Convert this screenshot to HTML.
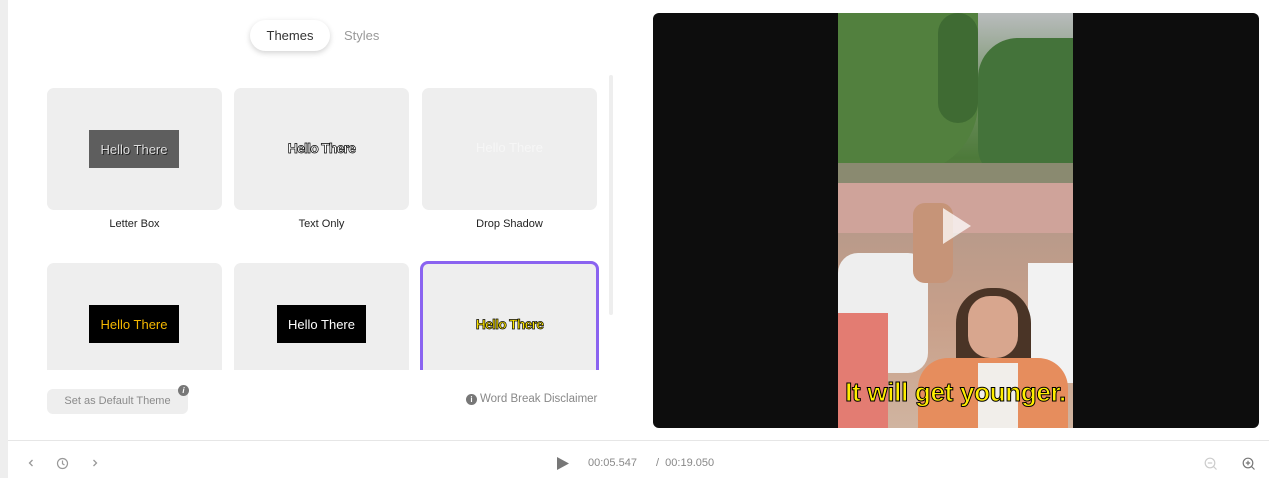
<!DOCTYPE html>
<html><head><style>
*{box-sizing:border-box;margin:0;padding:0}
body{width:1269px;height:478px;overflow:hidden;background:#fff;font-family:"Liberation Sans",sans-serif;position:relative}
.strip{position:absolute;left:0;top:0;width:8px;height:478px;background:#eeeeee}
.abs{position:absolute}
.card{position:absolute;background:#eeeeee;border-radius:7px;width:175px}
.lbl{position:absolute;font-size:11px;color:#222;text-align:center;width:175px}
.box{position:absolute;font-size:13px;display:flex;align-items:center;justify-content:center}
.ht{font-size:13px;position:absolute;width:100%;text-align:center}
</style></head><body>
<div class="strip"></div>
<div class="abs" style="left:250px;top:20px;width:80px;height:31px;border-radius:16px;background:#fff;box-shadow:0 2px 6px rgba(0,0,0,.18);font-size:13px;color:#333;text-align:center;line-height:31px">Themes</div>
<div class="abs" style="left:344px;top:28px;font-size:13px;color:#999">Styles</div>
<div class="abs" style="left:609px;top:75px;width:4px;height:240px;background:#eee;border-radius:2px"></div>
<div class="card" style="left:47px;top:88px;height:122px"><div class="box" style="left:42px;top:42px;width:90px;height:38px;background:#5e5e5e;color:#ddd;text-shadow:1px 1px 0 #222">Hello There</div></div>
<div class="card" style="left:234px;top:88px;height:122px"><div class="ht" style="top:52px;font-size:14px;color:#fff;-webkit-text-stroke:0.7px #000;font-weight:bold;letter-spacing:-0.8px">Hello There</div></div>
<div class="card" style="left:422px;top:88px;height:122px"><div class="ht" style="top:52px;color:#f6f6f6">Hello There</div></div>
<div class="lbl" style="left:47px;top:218px">Letter Box</div>
<div class="lbl" style="left:234px;top:218px">Text Only</div>
<div class="lbl" style="left:422px;top:218px">Drop Shadow</div>
<div class="card" style="left:47px;top:263px;height:107px;border-radius:7px 7px 0 0"><div class="box" style="left:42px;top:42px;width:90px;height:38px;background:#000;color:#f5b800">Hello There</div></div>
<div class="card" style="left:234px;top:263px;height:107px;border-radius:7px 7px 0 0"><div class="box" style="left:43px;top:42px;width:89px;height:38px;background:#000;color:#fff">Hello There</div></div>
<div class="card" style="left:420px;top:261px;width:179px;height:109px;border:3px solid #8a63f0;border-bottom:none;border-radius:8px 8px 0 0"><div class="ht" style="top:52px;font-size:14px;color:#ffe600;-webkit-text-stroke:0.7px #000;font-weight:bold;letter-spacing:-0.8px">Hello There</div></div>
<div class="abs" style="left:47px;top:389px;width:141px;height:25px;background:#eeeeee;border-radius:6px;font-size:11px;color:#8a8a8a;line-height:25px;text-align:center">Set as Default Theme</div>
<div class="abs" style="left:178px;top:385px;width:11px;height:11px;border-radius:50%;background:#777;color:#fff;font-size:8px;text-align:center;line-height:11px;font-style:italic;font-weight:bold">i</div>
<div class="abs" style="left:466px;top:394px;width:11px;height:11px;border-radius:50%;background:#777;color:#fff;font-size:8px;text-align:center;line-height:11px;font-weight:bold">i</div>
<div class="abs" style="left:480px;top:393px;font-size:11.5px;color:#888">Word Break Disclaimer</div>
<div class="abs" style="left:653px;top:13px;width:606px;height:415px;background:#0d0d0d;border-radius:6px;overflow:hidden">
 <div class="abs" style="left:185px;top:0;width:235px;height:415px;overflow:hidden;background:linear-gradient(180deg,#b9bcbd 0%,#6f8f60 20%,#4d7a3a 35%,#6b7a5a 45%,#b89a8a 52%,#c9a08a 75%,#d0b4a0 100%)">
  <div class="abs" style="left:0;top:0;width:140px;height:160px;background:#52803e;border-radius:0 0 70px 0"></div>
  <div class="abs" style="left:100px;top:0;width:40px;height:110px;background:#3f6b33;border-radius:20px"></div>
  <div class="abs" style="left:140px;top:25px;width:95px;height:140px;background:#44733a;border-radius:40px 0 0 30px"></div>
  <div class="abs" style="left:0;top:150px;width:235px;height:20px;background:#8a8a70"></div>
  <div class="abs" style="left:0;top:170px;width:235px;height:50px;background:#cfa39a"></div>
  <div class="abs" style="left:0;top:240px;width:90px;height:120px;background:#eee;border-radius:20px"></div>
  <div class="abs" style="left:75px;top:190px;width:40px;height:80px;background:#c69478;border-radius:12px"></div>
  <div class="abs" style="left:190px;top:250px;width:45px;height:120px;background:#f2f2f2"></div>
  <div class="abs" style="left:0;top:300px;width:50px;height:115px;background:#e37c72"></div>
  <div class="abs" style="left:118px;top:275px;width:75px;height:90px;background:#4a3426;border-radius:35px 35px 5px 5px"></div>
  <div class="abs" style="left:130px;top:283px;width:50px;height:62px;background:#d8a68e;border-radius:22px"></div>
  <div class="abs" style="left:80px;top:345px;width:150px;height:70px;background:#e68d5d;border-radius:30px 30px 0 0"></div>
  <div class="abs" style="left:140px;top:350px;width:40px;height:65px;background:#f1eeea"></div>
 </div>
 <div class="abs" style="left:175px;top:364px;width:255px;text-align:center;font-size:26px;font-weight:bold;color:#ffee00;-webkit-text-stroke:1px #000;letter-spacing:-0.3px">It will get younger.</div>
 <div class="abs" style="left:290px;top:195px;width:0;height:0;border-left:28px solid rgba(255,255,255,.75);border-top:18px solid transparent;border-bottom:18px solid transparent"></div>
</div>
<div class="abs" style="left:8px;top:440px;width:1261px;height:1px;background:#e6e6e6"></div>
<svg class="abs" style="left:25px;top:457px" width="12" height="12" viewBox="0 0 12 12"><path d="M7.5 3L4.5 6l3 3" fill="none" stroke="#999" stroke-width="1.3"/></svg>
<svg class="abs" style="left:56px;top:457px" width="13" height="13" viewBox="0 0 13 13"><circle cx="6.5" cy="6.5" r="5" fill="none" stroke="#999" stroke-width="1.2"/><path d="M6.5 3.5v3.3l2 1.2" fill="none" stroke="#999" stroke-width="1.2"/></svg>
<svg class="abs" style="left:89px;top:457px" width="12" height="12" viewBox="0 0 12 12"><path d="M4.5 3l3 3-3 3" fill="none" stroke="#999" stroke-width="1.3"/></svg>
<svg class="abs" style="left:556px;top:456px" width="14" height="15" viewBox="0 0 14 15"><path d="M1 1v13l12-6.5z" fill="#777"/></svg>
<div class="abs" style="left:588px;top:457px;font-size:11px;color:#888">00:05.547</div>
<div class="abs" style="left:656px;top:457px;font-size:11px;color:#888">/&nbsp; 00:19.050</div>
<svg class="abs" style="left:1204px;top:457px" width="14" height="14" viewBox="0 0 14 14"><circle cx="6" cy="6" r="4.8" fill="none" stroke="#ccc" stroke-width="1.2"/><path d="M3.8 6h4.4M9.5 9.5l3 3" stroke="#ccc" stroke-width="1.2"/></svg>
<svg class="abs" style="left:1242px;top:457px" width="14" height="14" viewBox="0 0 14 14"><circle cx="6" cy="6" r="4.8" fill="none" stroke="#777" stroke-width="1.2"/><path d="M3.8 6h4.4M6 3.8v4.4M9.5 9.5l3 3" stroke="#777" stroke-width="1.2"/></svg>
</body></html>
